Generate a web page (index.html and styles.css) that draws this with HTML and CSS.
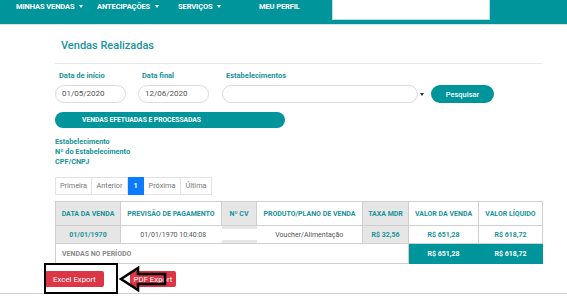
FILE: index.html
```html
<!DOCTYPE html>
<html lang="pt-BR">
<head>
<meta charset="utf-8">
<link rel="stylesheet" href="styles.css">
</head>
<body>
<nav class="topnav">
  <span class="nav-item">MINHAS VENDAS <i class="caret"></i></span>
  <span class="nav-item">ANTECIPAÇÕES <i class="caret"></i></span>
  <span class="nav-item">SERVIÇOS <i class="caret"></i></span>
  <span class="nav-item last">MEU PERFIL</span>
  <span class="nav-box"></span>
</nav>

<main class="page">
  <h1 class="title">Vendas Realizadas</h1>
  <hr class="rule">

  <div class="filters">
    <div class="field f1">
      <label>Data de início</label>
      <div class="input">01/05/2020</div>
    </div>
    <div class="field f2">
      <label>Data final</label>
      <div class="input">12/06/2020</div>
    </div>
    <div class="field f3">
      <label>Estabelecimentos</label>
      <div class="select-row"><div class="input wide"></div><i class="caret dark"></i></div>
    </div>
    <button class="btn-search">Pesquisar</button>
  </div>

  <div class="tabbar">VENDAS EFETUADAS E PROCESSADAS</div>

  <div class="info">
    <div>Estabelecimento</div>
    <div>Nº do Estabelecimento</div>
    <div>CPF/CNPJ</div>
  </div>

  <div class="pager">
    <span class="pg w1">Primeira</span>
    <span class="pg w2">Anterior</span>
    <span class="pg active">1</span>
    <span class="pg w3">Próxima</span>
    <span class="pg w4">Última</span>
  </div>

  <table class="grid">
    <thead>
      <tr class="head">
        <th class="c1 grey">DATA DA VENDA</th>
        <th class="c2">PREVISÃO DE PAGAMENTO</th>
        <th class="c3 grey">Nº CV</th>
        <th class="c4">PRODUTO/PLANO DE VENDA</th>
        <th class="c5 grey">TAXA MDR</th>
        <th class="c6">VALOR DA VENDA</th>
        <th class="c7">VALOR LÍQUIDO</th>
      </tr>
    </thead>
    <tbody>
      <tr class="data">
        <td class="grey teal">01/01/1970</td>
        <td class="plain nor">01/01/1970 10:40:08</td>
        <td class="cv"></td>
        <td class="plain nol">Voucher/Alimentação</td>
        <td class="grey teal">R$ 32,56</td>
        <td class="teal">R$ 651,28</td>
        <td class="teal">R$ 618,72</td>
      </tr>
      <tr class="foot">
        <td colspan="5" class="period">VENDAS NO PERÍODO</td>
        <td class="total">R$ 651,28</td>
        <td class="total">R$ 618,72</td>
      </tr>
    </tbody>
  </table>

  <div class="exports">
    <button class="btn-red excel">Excel Export</button>
    <button class="btn-red pdf">PDF Export</button>
  </div>
</main>

<div class="bottom-line"></div>

<div class="annot-box"></div>
<svg class="annot-arrow" width="50" height="26" viewBox="0 0 50 26">
  <path d="M2 13 L19 2 L19 8 L46 8 L46 18 L19 18 L19 24 Z" fill="none" stroke="#000" stroke-width="2.6" stroke-linejoin="miter"/>
</svg>
</body>
</html>
```

FILE: styles.css
```css
* { box-sizing: border-box; }
html, body { margin: 0; padding: 0; background: #fff; }
body {
  font-family: Roboto, "Noto Sans", "Liberation Sans", sans-serif;
  width: 567px;
  height: 296px;
  overflow: hidden;
  position: relative;
}

.topnav {
  height: 25px;
  background: #00959a;
  border-bottom: 1px solid #cfe9ea;
  display: flex;
  align-items: flex-start;
  padding-left: 16px;
}
.nav-item {
  width: 81px;
  color: #fff;
  font-weight: 700;
  font-size: 7.5px;
  line-height: 10px;
  padding-top: 2px;
  white-space: nowrap;
  letter-spacing: -0.1px;
}
.nav-item.last { width: 73px; }
.caret {
  display: inline-block;
  width: 0; height: 0;
  border-left: 2.5px solid transparent;
  border-right: 2.5px solid transparent;
  border-top: 3px solid #fff;
  vertical-align: middle;
  margin-left: 3px;
  margin-top: -2px;
}
.caret.dark { border-top-color: #333; margin-left: 2px; margin-top: 0; }
.nav-box {
  width: 158px;
  height: 20px;
  background: #fff;
  border: 1px solid #b9dfe0;
  border-top: 0;
}

.page { padding-left: 55px; width: 542px; }

.title {
  margin: 13px 0 0 6px;
  font-size: 11px;
  line-height: 16px;
  font-weight: 500;
  color: #17939a;
}
.rule {
  margin: 9px 0 0 0;
  border: 0;
  border-top: 1px solid #e8e8e8;
  height: 0;
}

.filters {
  display: flex;
  align-items: flex-end;
  margin-top: 7px;
}
.field { display: flex; flex-direction: column; }
.field label {
  font-size: 7.5px;
  line-height: 10px;
  font-weight: 700;
  color: #17939a;
  padding-left: 4px;
  margin-bottom: 4px;
}
.f1 { width: 83px; }
.f2 { width: 84px; }
.f3 { width: 209px; }
.input {
  width: 71px;
  height: 18px;
  border: 1px solid #dcdcdc;
  border-radius: 9px;
  font-size: 8px;
  line-height: 16px;
  color: #555;
  padding-left: 6px;
}
.select-row { display: flex; align-items: center; }
.input.wide { width: 196px; }
.btn-search {
  width: 63px;
  height: 18px;
  border: 0;
  border-radius: 9px;
  background: #00959a;
  color: #fff;
  font-family: inherit;
  font-size: 7.5px;
  font-weight: 500;
  padding: 0;
}

.tabbar {
  margin-top: 9px;
  width: 230px;
  height: 16px;
  border-radius: 8px;
  background: #00959a;
  color: #fff;
  font-size: 6.8px;
  font-weight: 700;
  line-height: 16px;
  padding-left: 27px;
  letter-spacing: -0.05px;
}

.info {
  margin-top: 9px;
  font-size: 7.3px;
  line-height: 10px;
  font-weight: 700;
  color: #17939a;
}

.pager {
  display: flex;
  margin-top: 10px;
  height: 18px;
}
.pg {
  height: 18px;
  border: 1px solid #e2e2e2;
  border-left: 0;
  font-size: 7.3px;
  line-height: 16px;
  color: #777;
  text-align: center;
}
.pg.w1 { width: 37px; border-left: 1px solid #e2e2e2; }
.pg.w2 { width: 36px; }
.pg.w3 { width: 37px; }
.pg.w4 { width: 31px; }
.pg.active { width: 16px; background: #0b7cff; border-color: #0b7cff; color: #fff; font-weight: 700; }

.grid {
  margin-top: 6px;
  width: 487px;
  border-collapse: collapse;
  table-layout: fixed;
  font-size: 7px;
}
.grid th, .grid td {
  border: 1px solid #cfcfcf;
  padding: 0;
  text-align: center;
  white-space: nowrap;
}
.grid th { height: 24px; font-weight: 700; color: #17939a; }
.c1 { width: 65px; }
.c2 { width: 101px; }
.c3 { width: 35px; }
.c4 { width: 106px; }
.c5 { width: 46px; }
.c6 { width: 70px; }
.c7 { width: 64px; }
.grey { background: #e6e6e6; }
.data td { height: 18px; color: #555; }
.data td.teal { color: #17939a; font-weight: 700; }
.data td.nor { border-right: 0; padding-left: 4px; }
.data td.nol { border-left: 0; }
.data td.cv {
  border-left: 0;
  border-right: 0;
  box-shadow: inset 0 3px 0 #e6e6e6, inset 0 -3px 0 #e6e6e6;
}
.foot td { height: 20px; }
.period { text-align: left !important; padding-left: 6px !important; color: #888; font-weight: 700; }
.total { background: #00959a; color: #fff; font-weight: 700; border-color: #00959a !important; }

.exports {
  display: flex;
  margin-top: 7px;
  margin-left: -10px;
}
.btn-red {
  height: 16px;
  border: 0;
  border-radius: 2px;
  background: #dc3545;
  color: #fff;
  font-family: inherit;
  font-size: 7.8px;
  padding: 0;
}
.excel { width: 59px; }
.pdf { width: 46px; margin-left: 26px; }

.bottom-line {
  position: absolute;
  left: 0; right: 0;
  top: 293px;
  height: 1px;
  background: #d0d0d0;
}
.annot-box {
  position: absolute;
  left: 44px; top: 263px;
  width: 74px; height: 31px;
  border: 2.5px solid #000;
}
.annot-arrow {
  position: absolute;
  left: 119px; top: 266px;
}
```
